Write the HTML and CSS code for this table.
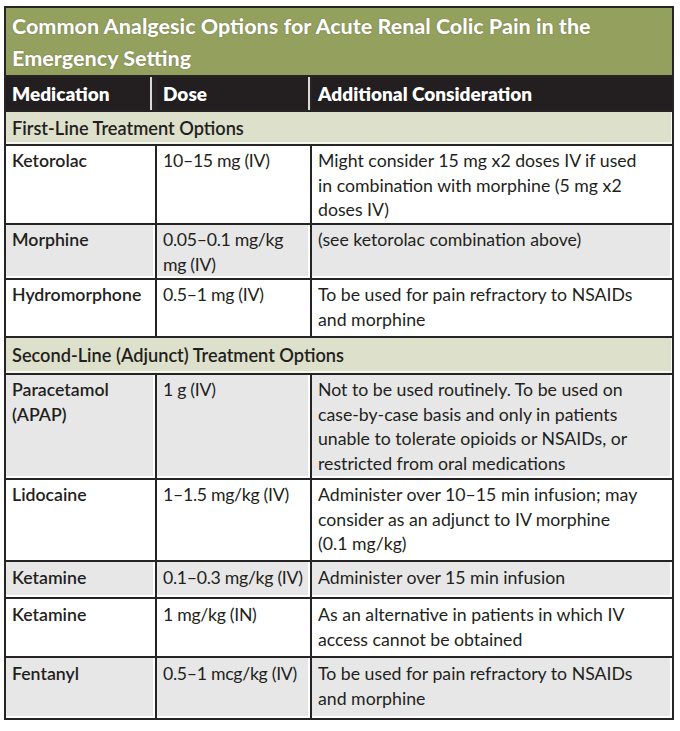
FILE: index.html
```html
<!DOCTYPE html>
<html lang="en">
<head>
<meta charset="utf-8">
<title>Common Analgesic Options</title>
<link rel="stylesheet" href="styles.css">
</head>
<body>
<table class="tbl">
  <colgroup>
    <col class="c1"><col class="c2"><col class="c3">
  </colgroup>
  <thead>
    <tr><th colspan="3" class="title">Common Analgesic Options for Acute Renal Colic Pain in the<br>Emergency Setting</th></tr>
    <tr class="head"><th>Medication</th><th>Dose</th><th>Additional Consideration</th></tr>
  </thead>
  <tbody>
    <tr class="section s1"><td colspan="3">First-Line Treatment Options</td></tr>
    <tr class="r-keto"><td class="med">Ketorolac</td><td class="dose">10–15 mg (IV)</td><td>Might consider 15 mg x2 doses IV if used<br>in combination with morphine (5 mg x2<br>doses IV)</td></tr>
    <tr class="alt r-morph"><td class="med">Morphine</td><td class="dose">0.05–0.1 mg/kg<br>mg (IV)</td><td>(see ketorolac combination above)</td></tr>
    <tr class="r-hydro"><td class="med">Hydromorphone</td><td class="dose">0.5–1 mg (IV)</td><td>To be used for pain refractory to NSAIDs<br>and morphine</td></tr>
    <tr class="section s2"><td colspan="3">Second-Line (Adjunct) Treatment Options</td></tr>
    <tr class="alt r-para"><td class="med">Paracetamol<br>(APAP)</td><td class="dose">1 g (IV)</td><td>Not to be used routinely. To be used on<br>case-by-case basis and only in patients<br>unable to tolerate opioids or NSAIDs, or<br>restricted from oral medications</td></tr>
    <tr class="r-lido"><td class="med">Lidocaine</td><td class="dose">1–1.5 mg/kg (IV)</td><td>Administer over 10–15 min infusion; may<br>consider as an adjunct to IV morphine<br>(0.1 mg/kg)</td></tr>
    <tr class="alt r-ket1"><td class="med">Ketamine</td><td class="dose">0.1–0.3 mg/kg (IV)</td><td>Administer over 15 min infusion</td></tr>
    <tr class="r-ket2"><td class="med">Ketamine</td><td class="dose">1 mg/kg (IN)</td><td>As an alternative in patients in which IV<br>access cannot be obtained</td></tr>
    <tr class="alt r-fent"><td class="med">Fentanyl</td><td class="dose">0.5–1 mcg/kg (IV)</td><td>To be used for pain refractory to NSAIDs<br>and morphine</td></tr>
  </tbody>
</table>
</body>
</html>
```
FILE: styles.css
```css
html, body {
  margin: 0;
  padding: 0;
  background: #ffffff;
}
body {
  font-family: Lato, "Liberation Sans", sans-serif;
  color: #231f20;
}
.tbl {
  margin: 6px 0 0 4px;
  width: 670px;
  border-collapse: separate;
  border-spacing: 0;
  border-left: 2px solid #262324;
  border-top: 2px solid #262324;
  table-layout: fixed;
}
.c1 { width: 151px; }
.c2 { width: 155px; }
.tbl th, .tbl td {
  border-right: 2px solid #262324;
  border-bottom: 2px solid #262324;
  text-align: left;
  vertical-align: top;
  padding: 3px 4px 0 6px;
  font-size: 17.7px;
  line-height: 24.6px;
  white-space: nowrap;
}
.tbl .dose {
  letter-spacing: -0.3px;
}
.tbl .title {
  background: #94a05d;
  color: #ffffff;
  font-weight: 900;
  font-size: 21.5px;
  line-height: 32px;
  padding: 2px 6px 1px 6px;
  text-shadow: 0 0 1px rgba(40, 40, 20, 0.7);
}
.head th {
  background: #231f20;
  color: #ffffff;
  font-weight: 800;
  font-size: 19px;
  line-height: 28px;
  padding: 3px 6px 2px 6px;
  border-right: 2px solid #262324;
  box-shadow: inset -2px 0 0 #d9d9d9;
  text-shadow: 0 0 1px rgba(0, 0, 0, 0.8);
}
.head th:first-child { box-shadow: inset -3px 0 0 #262324, inset -5px 0 0 #d9d9d9; }
.head th:last-child { box-shadow: none; }
.section td {
  background: #dde0ca;
  font-weight: 600;
  font-size: 18.2px;
  line-height: 26px;
  padding: 3px 6px 3px 6px;
  box-shadow: inset -1px -2px 0 #f5f6ee;
}
.s2 td { padding-top: 4px; }
.tbl .med {
  font-weight: 600;
}
.alt td {
  background: #e7e7e7;
  box-shadow: inset -2px -2px 0 #ffffff;
}
.r-keto { height: 79px; }
.r-morph { height: 55px; }
.r-hydro { height: 58px; }
.s2 { height: 37px; }
.r-para { height: 105px; }
.r-lido { height: 82px; }
.r-ket1 { height: 37px; }
.r-ket2 { height: 59px; }
.r-fent { height: 62px; }
.r-ket1 td, .r-ket2 td, .r-fent td { padding-top: 4px; }
```
